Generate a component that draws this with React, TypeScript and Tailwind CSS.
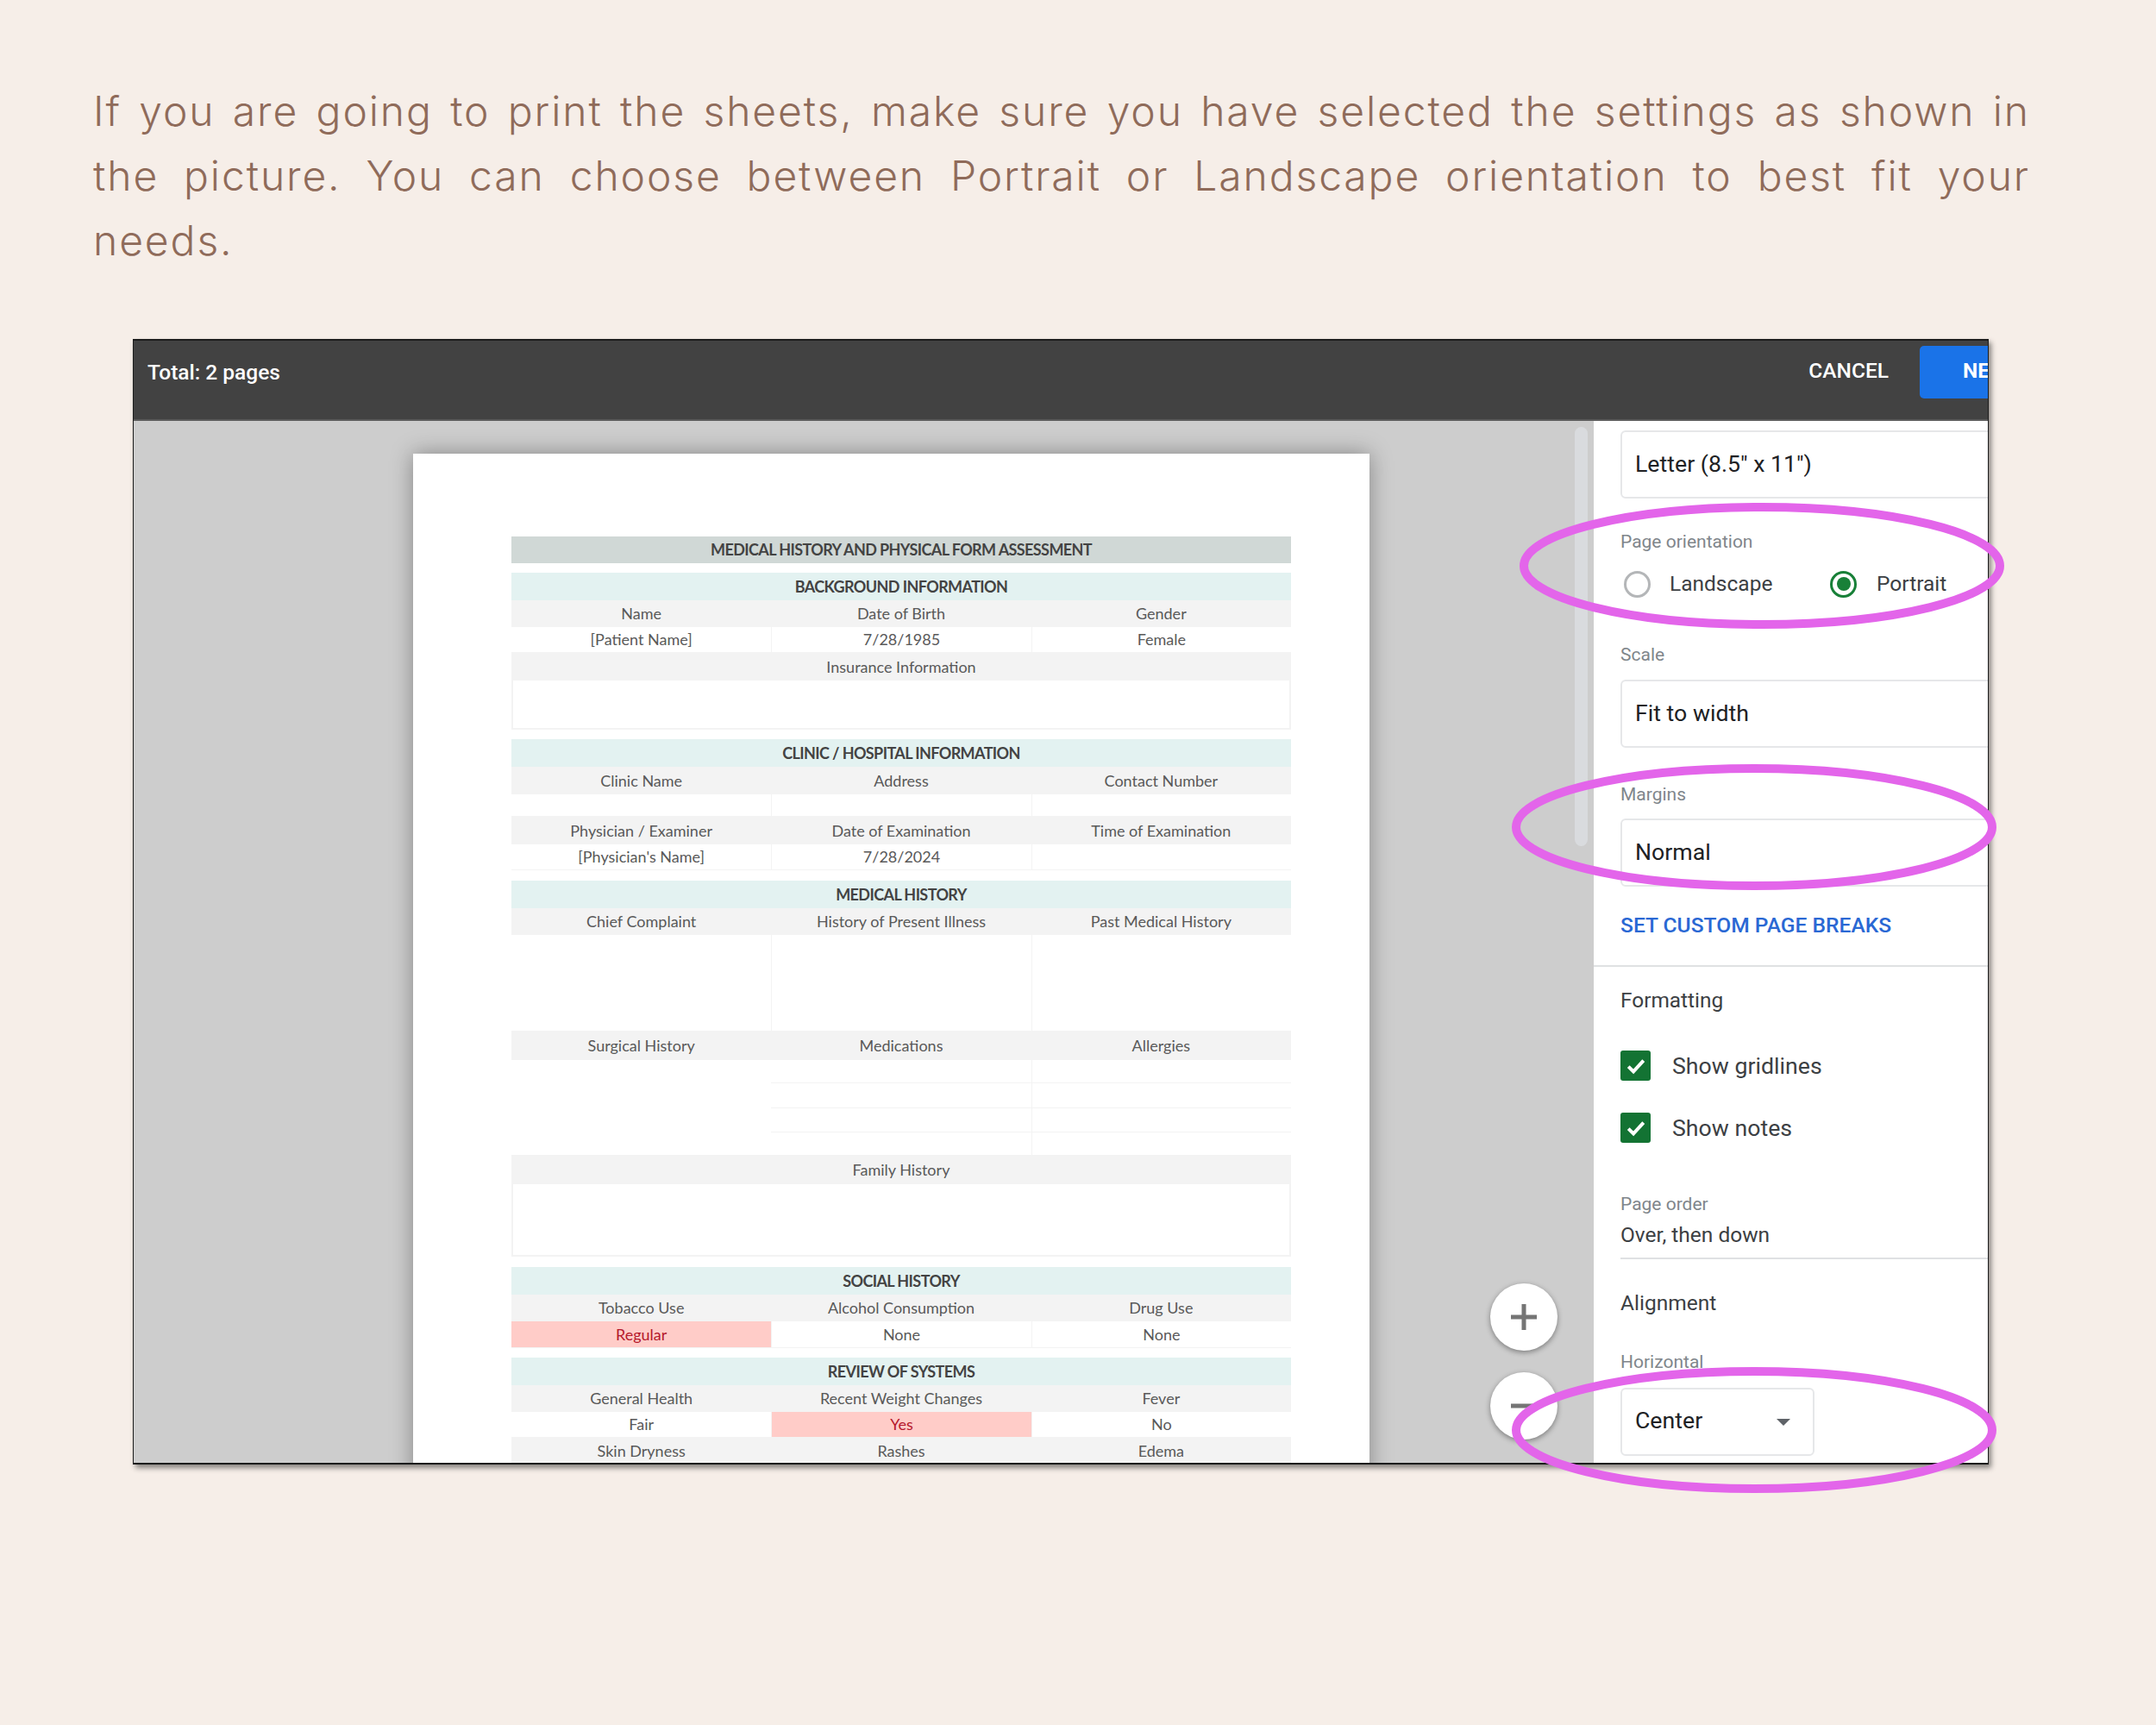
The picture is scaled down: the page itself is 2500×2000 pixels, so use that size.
type CellProps = { text?: string; red?: boolean };

function Band({ text, title }: { text: string; title?: boolean }) {
  return (
    <div className={`flex items-center justify-center font-bold tracking-[-0.6px] text-[#434343] ${title ? "h-[31px] bg-[#d0d8d6]" : "h-[32px] bg-[#e3f2f1]"}`}>
      {text}
    </div>
  );
}

function Cell({ text, red }: CellProps) {
  return (
    <div className={`flex items-center justify-center ${red ? "bg-[#ffccc8] text-[#b5182c]" : ""}`}>{text}</div>
  );
}

function HeadRow({ cells, h }: { cells: string[]; h: string }) {
  return (
    <div className={`grid grid-cols-3 bg-[#f3f3f3] ${h}`}>
      {cells.map((c) => (
        <Cell key={c} text={c} />
      ))}
    </div>
  );
}

function ValueRow({ cells, h, red }: { cells: string[]; h: string; red?: number }) {
  return (
    <div className={`grid grid-cols-3 border-b border-[#f3f3f3] ${h}`}>
      {cells.map((c, i) => (
        <div key={i} className={i > 0 ? "grid border-l border-[#f3f3f3]" : "grid"}>
          <Cell text={c} red={red === i} />
        </div>
      ))}
    </div>
  );
}

function Wide({ text, h }: { text: string; h: string }) {
  return <div className={`flex items-center justify-center bg-[#f3f3f3] ${h}`}>{text}</div>;
}

function Blank({ h }: { h: string }) {
  return <div className={`border-x-2 border-b-2 border-[#f3f3f3] ${h}`} />;
}

function SheetTable() {
  return (
    <div className="ml-[114px] flex w-[904px] flex-col font-['Lato',sans-serif] text-[18px] text-[#595959]">
      <Band text="MEDICAL HISTORY AND PHYSICAL FORM ASSESSMENT" title />
      <div className="h-[11px]" />
      <Band text="BACKGROUND INFORMATION" />
      <HeadRow cells={["Name", "Date of Birth", "Gender"]} h="h-[31px]" />
      <ValueRow cells={["[Patient Name]", "7/28/1985", "Female"]} h="h-[30px]" />
      <Wide text="Insurance Information" h="h-[32px]" />
      <Blank h="h-[57px]" />
      <div className="h-[11px]" />
      <Band text="CLINIC / HOSPITAL INFORMATION" />
      <HeadRow cells={["Clinic Name", "Address", "Contact Number"]} h="h-[32px]" />
      <ValueRow cells={["", "", ""]} h="h-[26px]" />
      <HeadRow cells={["Physician / Examiner", "Date of Examination", "Time of Examination"]} h="h-[32px]" />
      <ValueRow cells={["[Physician's Name]", "7/28/2024", ""]} h="h-[30px]" />
      <div className="h-[12px]" />
      <Band text="MEDICAL HISTORY" />
      <HeadRow cells={["Chief Complaint", "History of Present Illness", "Past Medical History"]} h="h-[31px]" />
      <ValueRow cells={["", "", ""]} h="h-[112px]" />
      <HeadRow cells={["Surgical History", "Medications", "Allergies"]} h="h-[33px]" />
      <div className="grid h-[110px] grid-cols-3">
        <div />
        <div className="col-span-2 flex flex-col">
          <ValueRow cells={["", ""]} h="h-[27px] !grid-cols-2" />
          <ValueRow cells={["", ""]} h="h-[29px] !grid-cols-2" />
          <ValueRow cells={["", ""]} h="h-[28px] !grid-cols-2" />
          <ValueRow cells={["", ""]} h="h-[26px] !grid-cols-2 !border-b-0" />
        </div>
      </div>
      <Wide text="Family History" h="h-[34px]" />
      <Blank h="h-[84px]" />
      <div className="h-[12px]" />
      <Band text="SOCIAL HISTORY" />
      <HeadRow cells={["Tobacco Use", "Alcohol Consumption", "Drug Use"]} h="h-[31px]" />
      <ValueRow cells={["Regular", "None", "None"]} h="h-[31px]" red={0} />
      <div className="h-[11px]" />
      <Band text="REVIEW OF SYSTEMS" />
      <HeadRow cells={["General Health", "Recent Weight Changes", "Fever"]} h="h-[31px]" />
      <ValueRow cells={["Fair", "Yes", "No"]} h="h-[30px]" red={1} />
      <HeadRow cells={["Skin Dryness", "Rashes", "Edema"]} h="h-[30px]" />
    </div>
  );
}

function Select({ text, className }: { text: string; className?: string }) {
  return (
    <div className={`flex h-[79px] items-center rounded-[6px] border-2 border-[#e6e7e9] pl-[15px] text-[26.7px] text-[#202124] ${className ?? ""}`}>
      {text}
    </div>
  );
}

function FieldLabel({ text, className }: { text: string; className?: string }) {
  return <div className={`h-[30px] text-[21px] leading-[30px] text-[#80868b] ${className ?? ""}`}>{text}</div>;
}

function Radio({ on }: { on?: boolean }) {
  return (
    <span className={`flex size-[31px] items-center justify-center rounded-full border-[3px] ${on ? "border-[#188038]" : "border-[#b4b6b8]"}`}>
      {on && <span className="size-[16px] rounded-full bg-[#188038]" />}
    </span>
  );
}

function Check({ text, className }: { text: string; className?: string }) {
  return (
    <div className={`flex h-[35px] items-center ${className ?? ""}`}>
      <span className="flex size-[35px] items-center justify-center rounded-[3px] bg-[#137333]">
        <svg viewBox="0 0 24 24" className="size-[28px]" fill="none" stroke="white" strokeWidth="3.4">
          <path d="M4.5 12.5l5 5L19.5 6.5" />
        </svg>
      </span>
      <span className="ml-[25px] mt-[2px] text-[26.7px] text-[#3c4043]">{text}</span>
    </div>
  );
}

function ZoomButton({ minus, className }: { minus?: boolean; className: string }) {
  return (
    <div className={`absolute flex size-[78px] items-center justify-center rounded-full bg-white shadow-[0_2px_6px_rgba(0,0,0,0.4)] ${className}`}>
      <svg viewBox="0 0 30 30" className="size-[30px]" fill="#757575">
        <rect x="0" y="12.5" width="30" height="5" />
        {!minus && <rect x="12.5" y="0" width="5" height="30" />}
      </svg>
    </div>
  );
}

function SettingsPanel() {
  return (
    <div className="w-[457px] shrink-0 overflow-hidden bg-white font-['Roboto',sans-serif]">
      <div className="w-[600px] pl-[31px]">
        <Select text={'Letter (8.5" x 11")'} className="mt-[11px]" />
        <FieldLabel text="Page orientation" className="mt-[35px]" />
        <div className="mt-[14px] flex h-[40px] items-center pl-[4px] text-[24.5px] text-[#3c4043]">
          <Radio />
          <span className="ml-[22px] w-[186px]">Landscape</span>
          <Radio on />
          <span className="ml-[23px]">Portrait</span>
        </div>
        <FieldLabel text="Scale" className="mt-[47px]" />
        <Select text="Fit to width" className="mt-[14px]" />
        <FieldLabel text="Margins" className="mt-[39px]" />
        <Select text="Normal" className="mt-[13px]" />
        <div className="mt-[30px] h-[30px] text-[24.6px] font-medium leading-[30px] text-[#2a68d4]">SET CUSTOM PAGE BREAKS</div>
      </div>
      <div className="mt-[31px] h-[2px] bg-[#dfe1e3]" />
      <div className="w-[600px] pl-[31px]">
        <div className="mt-[24px] h-[30px] text-[24.4px] leading-[30px] text-[#3c4043]">Formatting</div>
        <Check text="Show gridlines" className="mt-[43px]" />
        <Check text="Show notes" className="mt-[37px]" />
        <FieldLabel text="Page order" className="mt-[56px]" />
        <div className="mt-[6px] h-[30px] text-[24.5px] leading-[30px] text-[#3c4043]">Over, then down</div>
        <div className="mt-[11px] h-[2px] bg-[#dfe1e3]" />
        <div className="mt-[36px] h-[30px] text-[24.5px] leading-[30px] text-[#3c4043]">Alignment</div>
        <FieldLabel text="Horizontal" className="mt-[38px]" />
        <div className="mt-[15px] flex h-[79px] w-[225px] items-center justify-between rounded-[6px] border-2 border-[#e6e7e9] pl-[15px] pr-[26px] text-[26.7px] text-[#202124]">
          <span className="-mt-[2px]">Center</span>
          <svg viewBox="0 0 16 8" className="h-[8px] w-[16px]" fill="#5f6368">
            <path d="M0 0h16l-8 8z" />
          </svg>
        </div>
      </div>
    </div>
  );
}

export default function App() {
  return (
    <div className="relative h-[2000px] w-[2500px] overflow-hidden bg-[#f6eee8]">
      <p className="pl-[108px] pr-[146px] pt-[91px] text-justify font-['Inter',sans-serif] text-[48px] font-light leading-[75px] tracking-[1.9px] text-[#8f6b5a]">
        If you are going to print the sheets, make sure you have selected the settings as shown in the picture. You can choose between Portrait or Landscape orientation to best fit your needs.
      </p>
      <div className="ml-[154px] mt-[77px] flex h-[1305px] w-[2152px] flex-col overflow-hidden border-x border-t-2 border-b-2 border-[#1c1c1c] shadow-[3px_4px_6px_rgba(0,0,0,0.45)]">
        <div className="flex h-[93px] shrink-0 justify-between border-b-2 border-[#5a5a5a] bg-[#424242] pl-[16px] font-['Roboto',sans-serif] text-[24.5px] font-medium text-white">
          <span className="mt-[19px]">Total: 2 pages</span>
          <div className="flex items-start pt-[6px]">
            <span className="mt-[11px]">CANCEL</span>
            <span className="ml-[36px] flex h-[61px] w-[79px] items-center overflow-hidden rounded-l-[5px] bg-[#1a73e8] pb-[2px] pl-[50px] font-bold text-white">NE</span>
          </div>
        </div>
        <div className="flex min-h-0 flex-1">
          <div className="relative min-w-0 flex-1 overflow-hidden bg-[#cdcdcd]">
            <div className="ml-[324px] mt-[38px] h-[1300px] w-[1109px] bg-white pt-[96px] shadow-[0_0_24px_rgba(0,0,0,0.35)]">
              <SheetTable />
            </div>
            <div className="absolute left-[1671px] top-[7px] h-[486px] w-[15px] rounded-full bg-[#d9dbde]" />
            <ZoomButton className="left-[1573px] top-[1000px]" />
            <ZoomButton minus className="left-[1573px] top-[1103px]" />
          </div>
          <SettingsPanel />
        </div>
      </div>
      <svg className="pointer-events-none absolute inset-0 h-[2000px] w-[2500px]" viewBox="0 0 2500 2000" fill="none" stroke="#e365ea" strokeWidth="10">
        <ellipse cx="2043" cy="656" rx="276" ry="68" />
        <ellipse cx="2034" cy="959" rx="276" ry="68" />
        <ellipse cx="2034" cy="1658" rx="276" ry="68" />
      </svg>
    </div>
  );
}
